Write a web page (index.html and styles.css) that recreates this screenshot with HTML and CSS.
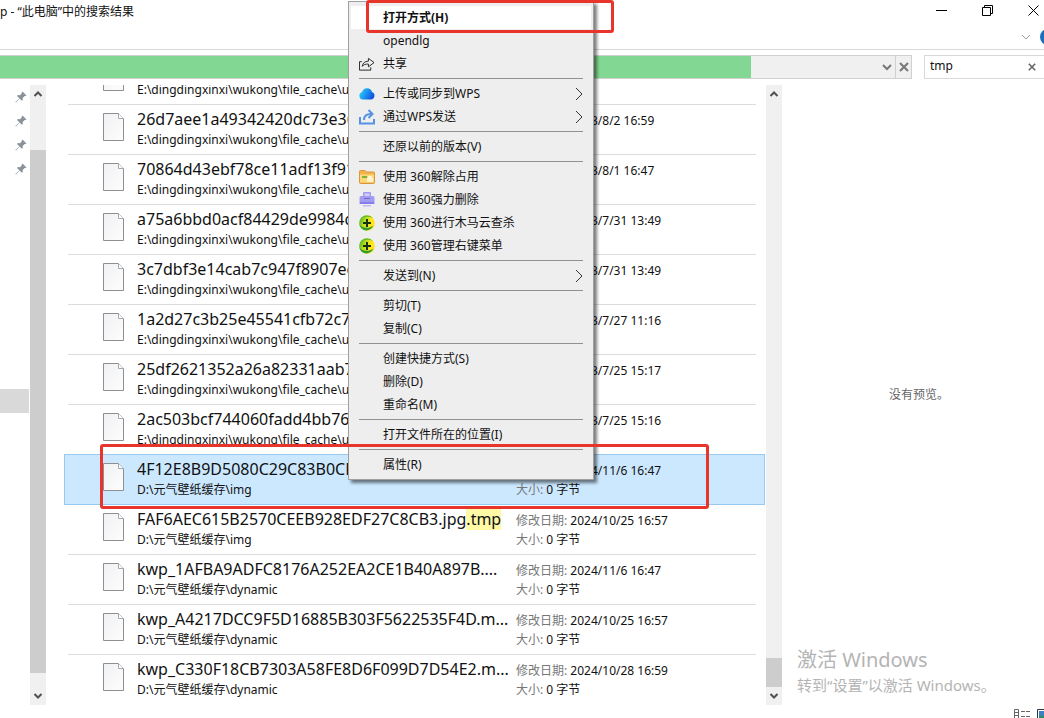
FILE: index.html
```html
<!DOCTYPE html>
<html lang="zh-CN">
<head>
<meta charset="utf-8">
<title>tmp - “此电脑”中的搜索结果</title>
<link rel="stylesheet" href="styles.css">
</head>
<body>
<svg class="defs" aria-hidden="true">
  <defs>
    <linearGradient id="paper" x1="0" y1="0" x2="1" y2="1"><stop offset="0" stop-color="#f0f1f3"/><stop offset="1" stop-color="#fdfdfd"/></linearGradient>
    <linearGradient id="cloud" x1="0" y1="0" x2="1" y2=".4"><stop offset="0" stop-color="#3bdcf0"/><stop offset=".5" stop-color="#1a9cf2"/><stop offset="1" stop-color="#1557e0"/></linearGradient>
    <linearGradient id="ball" x1="0" y1=".2" x2="1" y2=".6"><stop offset="0" stop-color="#3fae2a"/><stop offset=".35" stop-color="#b4dc20"/><stop offset=".7" stop-color="#ffe51f"/></linearGradient>
    <symbol id="file" viewBox="0 0 22 29"><path d="M.5.5h15l5 5v22H.5z" fill="url(#paper)" stroke="#8d8f92"/><path d="M15.500.5v5h5" fill="#fff" stroke="#a5a7aa"/></symbol>
    <symbol id="pin" viewBox="0 0 12 12"><path d="M7.500.5l4 4-1 .6-.8-.1-2 2 .1 1.900-.9.9L4.600 7.500.8 11.400l-.4-.4 4-3.800L2 5l1-.9 1.900.1 2-2-.1-.9z" fill="#8b929a"/></symbol>
    <symbol id="up" viewBox="0 0 10 10"><path d="M1.500 7L5 3.500 8.500 7" fill="none" stroke="#505050" stroke-width="2"/></symbol>
    <symbol id="down" viewBox="0 0 10 10"><path d="M1.500 3L5 6.500 8.500 3" fill="none" stroke="#505050" stroke-width="2"/></symbol>
    <symbol id="cross" viewBox="0 0 10 10"><path d="M1 1l8 8M9 1L1 9" fill="none" stroke="currentColor" stroke-width="2"/></symbol>
    <symbol id="next" viewBox="0 0 8 14"><path d="M1 1l6 6-6 6" fill="none" stroke="#333"/></symbol>
    <symbol id="safe" viewBox="0 0 16 16"><circle cx="8" cy="8" r="7.800" fill="url(#ball)"/><path d="M.3 9C2 13 9 14.500 14.500 10.500 12 17 2 17.500.3 9z" fill="#2f9e2c"/><path d="M1 5C3 0 10-1 14 3 9 1 4 1.500 1 5z" fill="#5dbb2a"/><path d="M8 4v8M4 8h8" stroke="#16330c" stroke-width="2"/></symbol>
  </defs>
</svg>

<div class="window">
  <header class="titlebar">
    <h1 class="title">p - “此电脑”中的搜索结果</h1>
    <div class="controls">
      <button type="button" aria-label="最小化"><svg width="11" height="11"><path d="M0 5.500h11" stroke="#000"/></svg></button>
      <button type="button" aria-label="还原"><svg width="11" height="11" fill="none" stroke="#000"><path d="M.5 2.500h8v8h-8zM2.500 2.500v-2h8v8h-2"/></svg></button>
      <button type="button" aria-label="关闭"><svg width="11" height="11"><path d="M.5.5l10 10M10.500.5l-10 10" stroke="#000"/></svg></button>
    </div>
  </header>
  <div class="ribbon">
    <button type="button" aria-label="展开功能区"><svg width="10" height="6"><path d="M1 1l4 4 4-4" fill="none" stroke="#a0a0a0"/></svg></button>
    <button type="button" class="help" aria-label="帮助"></button>
  </div>
  <div class="toolbar">
    <div class="address">
      <div class="progress"></div>
      <button type="button" aria-label="以前的位置"><svg width="10" height="10"><path d="M1 3l4 4 4-4" fill="none" stroke="#777" stroke-width="2"/></svg></button>
      <button type="button" class="stop" aria-label="停止"><svg width="10" height="10"><use href="#cross"/></svg></button>
    </div>
    <form class="search">
      <input type="text" value="tmp" aria-label="搜索">
      <button type="button" aria-label="清除"><svg width="8" height="8"><use href="#cross"/></svg></button>
    </form>
  </div>

  <main class="content">
    <nav class="nav" aria-label="快速访问">
      <ul>
        <li><svg><use href="#pin"/></svg></li>
        <li><svg><use href="#pin"/></svg></li>
        <li><svg><use href="#pin"/></svg></li>
        <li><svg><use href="#pin"/></svg></li>
      </ul>
      <div class="current"></div>
    </nav>
    <div class="scroll nav-scroll"><svg><use href="#up"/></svg><span class="before"></span><span class="thumb"></span><span class="after"></span><svg><use href="#down"/></svg></div>

    <ul class="files">
      <li><svg><use href="#file"/></svg><div class="name"><b>1f9c7b3a4e2d6058c1ab92e4</b><span>E:\dingdingxinxi\wukong\file_cache\u</span></div><div class="meta"><p>修改日期: <b>2023/8/2 17:02</b></p><p>大小: <b>217 字节</b></p></div></li>
      <li><svg><use href="#file"/></svg><div class="name"><b>26d7aee1a49342420dc73e36</b><span>E:\dingdingxinxi\wukong\file_cache\u</span></div><div class="meta"><p>修改日期: <b>2023/8/2 16:59</b></p><p>大小: <b>217 字节</b></p></div></li>
      <li><svg><use href="#file"/></svg><div class="name"><b>70864d43ebf78ce11adf13f91</b><span>E:\dingdingxinxi\wukong\file_cache\u</span></div><div class="meta"><p>修改日期: <b>2023/8/1 16:47</b></p><p>大小: <b>217 字节</b></p></div></li>
      <li><svg><use href="#file"/></svg><div class="name"><b>a75a6bbd0acf84429de9984d</b><span>E:\dingdingxinxi\wukong\file_cache\u</span></div><div class="meta"><p>修改日期: <b>2023/7/31 13:49</b></p><p>大小: <b>217 字节</b></p></div></li>
      <li><svg><use href="#file"/></svg><div class="name"><b>3c7dbf3e14cab7c947f8907ec</b><span>E:\dingdingxinxi\wukong\file_cache\u</span></div><div class="meta"><p>修改日期: <b>2023/7/31 13:49</b></p><p>大小: <b>217 字节</b></p></div></li>
      <li><svg><use href="#file"/></svg><div class="name"><b>1a2d27c3b25e45541cfb72c7</b><span>E:\dingdingxinxi\wukong\file_cache\u</span></div><div class="meta"><p>修改日期: <b>2023/7/27 11:16</b></p><p>大小: <b>217 字节</b></p></div></li>
      <li><svg><use href="#file"/></svg><div class="name"><b>25df2621352a26a82331aab7</b><span>E:\dingdingxinxi\wukong\file_cache\u</span></div><div class="meta"><p>修改日期: <b>2023/7/25 15:17</b></p><p>大小: <b>217 字节</b></p></div></li>
      <li><svg><use href="#file"/></svg><div class="name"><b>2ac503bcf744060fadd4bb769</b><span>E:\dingdingxinxi\wukong\file_cache\u</span></div><div class="meta"><p>修改日期: <b>2023/7/25 15:16</b></p><p>大小: <b>217 字节</b></p></div></li>
      <li class="selected"><svg><use href="#file"/></svg><div class="name"><b>4F12E8B9D5080C29C83B0CE9</b><span>D:\元气壁纸缓存\img</span></div><div class="meta"><p>修改日期: <b>2024/11/6 16:47</b></p><p>大小: <b>0 字节</b></p></div></li>
      <li><svg><use href="#file"/></svg><div class="name"><b>FAF6AEC615B2570CEEB928EDF27C8CB3.jpg<mark>.tmp</mark></b><span>D:\元气壁纸缓存\img</span></div><div class="meta"><p>修改日期: <b>2024/10/25 16:57</b></p><p>大小: <b>0 字节</b></p></div></li>
      <li><svg><use href="#file"/></svg><div class="name"><b>kwp_1AFBA9ADFC8176A252EA2CE1B40A897B....</b><span>D:\元气壁纸缓存\dynamic</span></div><div class="meta"><p>修改日期: <b>2024/11/6 16:47</b></p><p>大小: <b>0 字节</b></p></div></li>
      <li><svg><use href="#file"/></svg><div class="name"><b>kwp_A4217DCC9F5D16885B303F5622535F4D.m...</b><span>D:\元气壁纸缓存\dynamic</span></div><div class="meta"><p>修改日期: <b>2024/10/25 16:57</b></p><p>大小: <b>0 字节</b></p></div></li>
      <li><svg><use href="#file"/></svg><div class="name"><b>kwp_C330F18CB7303A58FE8D6F099D7D54E2.m...</b><span>D:\元气壁纸缓存\dynamic</span></div><div class="meta"><p>修改日期: <b>2024/10/28 16:59</b></p><p>大小: <b>0 字节</b></p></div></li>
    </ul>
    <div class="scroll list-scroll"><svg><use href="#up"/></svg><span class="before"></span><span class="thumb"></span><svg><use href="#down"/></svg></div>

    <aside class="preview">
      <p>没有预览。</p>
      <div class="watermark"><strong>激活 Windows</strong><span>转到“设置”以激活 Windows。</span></div>
    </aside>
  </main>

  <footer class="status">
    <button type="button" aria-label="详细信息"><svg width="16" height="10" fill="none" stroke="#666"><path d="M.5.5h4v9h-4zM.5 3.500h4M.5 6.500h4M7 2.500h4M12 2.500h4M7 7.500h4M12 7.500h4"/></svg></button>
    <button type="button" aria-label="大缩略图"><svg width="16" height="10"><path d="M.5.5h15v12H.5z" fill="#fff" stroke="#333"/><path d="M2 2h12v8H2z" fill="#3f7fc4"/><path d="M2 10V8l3-2 5 4z" fill="#2d8c65"/></svg></button>
  </footer>
</div>

<div class="menu" role="menu">
  <button type="button" role="menuitem" class="default"><i></i>打开方式(H)</button>
  <button type="button" role="menuitem"><i></i>opendlg</button>
  <button type="button" role="menuitem"><i><svg width="17" height="16" viewBox="0 0 17 16" fill="none" stroke="#222"><path d="M3 5.500H.5v9h12v-3M3.500 10.500c.5-3.500 2.500-5.500 6.500-5.500V2l6 4.500-6 4.500V8c-3 0-5 .5-6.500 2.500z"/></svg></i>共享</button>
  <hr>
  <button type="button" role="menuitem"><i><svg width="16" height="13" viewBox="0 0 16 13"><path d="M4 12.500a3.800 3.800 0 0 1-1-7.400A5.200 5.200 0 0 1 13 5a3.900 3.900 0 0 1-1 7.500z" fill="url(#cloud)"/></svg></i>上传或同步到WPS<svg class="more"><use href="#next"/></svg></button>
  <button type="button" role="menuitem"><i><svg width="16" height="16" viewBox="0 0 16 16" fill="none" stroke="#5591e5" stroke-width="2"><path d="M1 8v6.500h14V10"/><path d="M5 11c0-4 2-6 7-6"/><path d="M9.500 1l4 4-4 4"/></svg></i>通过WPS发送<svg class="more"><use href="#next"/></svg></button>
  <hr>
  <button type="button" role="menuitem"><i></i>还原以前的版本(V)</button>
  <hr>
  <button type="button" role="menuitem"><i><svg width="16" height="14" viewBox="0 0 16 14"><path d="M.5 1.500Q.5.5 1.500.5H6l1.500 1.500h7q1 0 1 1v9.500q0 1-1 1h-13q-1 0-1-1z" fill="#f3b24b" stroke="#d9963a"/><path d="M1 4.500h14v8H1z" fill="#fbd978"/><path d="M3 7h5" stroke="#7fae41" stroke-width="2"/><path d="M9.500 8.500V6.500h3v2M8.500 8.500h5v3h-5z" fill="#fff3be" stroke="#fff6d8"/></svg></i>使用 360解除占用</button>
  <button type="button" role="menuitem"><i><svg width="16" height="15" viewBox="0 0 16 15"><path d="M4 1q0-1 1-1h6q1 0 1 1v3h2q1.500 0 1.500 1.500V12H.5V5.500Q.5 4 2 4h2z" fill="#a29bf0"/><path d="M5.500 1.500h5V4h-5z" fill="#d3cff9"/><path d="M5 6.500h6" stroke="#6f69d4"/><path d="M1 10h14v2H1z" fill="#857df0"/><path d="M4 13h8v1.500H4z" fill="#c2bdf6"/></svg></i>使用 360强力删除</button>
  <button type="button" role="menuitem"><i><svg width="16" height="16"><use href="#safe"/></svg></i>使用 360进行木马云查杀</button>
  <button type="button" role="menuitem"><i><svg width="16" height="16"><use href="#safe"/></svg></i>使用 360管理右键菜单</button>
  <hr>
  <button type="button" role="menuitem"><i></i>发送到(N)<svg class="more"><use href="#next"/></svg></button>
  <hr>
  <button type="button" role="menuitem"><i></i>剪切(T)</button>
  <button type="button" role="menuitem"><i></i>复制(C)</button>
  <hr>
  <button type="button" role="menuitem"><i></i>创建快捷方式(S)</button>
  <button type="button" role="menuitem"><i></i>删除(D)</button>
  <button type="button" role="menuitem"><i></i>重命名(M)</button>
  <hr>
  <button type="button" role="menuitem"><i></i>打开文件所在的位置(I)</button>
  <hr>
  <button type="button" role="menuitem"><i></i>属性(R)</button>
</div>
<div class="frame frame-open"></div>
<div class="frame frame-file"></div>
</body>
</html>
```

FILE: styles.css
```css
* { box-sizing: border-box; }
body {
  margin: 0;
  font: 12px/18px "Noto Sans", "Noto Sans CJK SC", sans-serif;
  color: #111;
  background: #fff;
  overflow: hidden;
}
button {
  display: flex;
  align-items: center;
  justify-content: center;
  padding: 0;
  border: 0;
  background: none;
  font: inherit;
  color: inherit;
}
ul { list-style: none; margin: 0; padding: 0; }
p { margin: 0; }
.defs { position: absolute; width: 0; height: 0; }

.window { display: flex; flex-direction: column; height: 100vh; position: relative; overflow: hidden; }
.titlebar { display: flex; justify-content: space-between; height: 24px; }
.title { margin: 0; padding-top: 3px; font-size: 12px; font-weight: 400; line-height: 18px; }
.controls { display: flex; height: 21px; margin-right: -12px; }
.controls button { width: 46px; }

.ribbon { display: flex; justify-content: flex-end; align-items: center; gap: 9px; height: 26px; margin-right: -12px; border-bottom: 1px solid #d9d9d9; }
.help { width: 16px; height: 16px; border-radius: 50%; background: #1a6fc0; }

.toolbar { display: flex; gap: 12px; padding-top: 5px; height: 35px; }
.address { display: flex; flex: 1; height: 24px; border: 1px solid #d0d0d0; border-left: 0; background: #f0f0f0; }
.progress { width: 82.4%; margin-right: auto; background: #82d892; }
.address button { width: 16px; }
.address .stop { border-left: 1px solid #d0d0d0; color: #777; }
.search { display: flex; width: 120px; height: 24px; border: 1px solid #d9d9d9; border-right: 0; }
.search input { flex: 1; min-width: 0; padding: 0 5px 2px; border: 0; outline: 0; font: inherit; font-size: 12px; color: #111; }
.search button { width: 24px; color: #666; }

.content { display: flex; flex: 1; min-height: 0; }
.nav { width: 30px; }
.nav li { display: flex; align-items: center; height: 24px; padding-left: 15px; }
.nav li svg { width: 12px; height: 12px; }
.current { width: 29px; height: 24px; margin-top: 208px; background: #d9d9d9; }

.scroll { display: flex; flex-direction: column; align-items: center; width: 16px; background: #f0f0f0; }
.scroll svg { width: 10px; height: 10px; margin: 4px 0; flex: none; }
.thumb { width: 100%; background: #cdcdcd; }
.nav-scroll .before { flex: 47; }
.nav-scroll .thumb { flex: 523; }
.nav-scroll .after { flex: 14; }
.list-scroll .before { flex: 556; }
.list-scroll .thumb { flex: 29; }

.files { display: flex; flex-direction: column; justify-content: flex-end; flex: 1; margin-left: 18px; overflow: hidden; }
.files li {
  position: relative;
  display: flex;
  flex: none;
  height: 50px;
  margin: 0 10px 0 4px;
  padding-left: 35px;
  border-bottom: 1px solid #dcdcdc;
}
.files li:last-child { border-bottom-color: transparent; }
.files li svg { flex: none; width: 22px; height: 29px; margin: 8px 12px 0 0; }
.files li b { font-weight: 400; color: #111; }
.files .selected { margin: -1px 1px 0 0; height: 51px; padding: 0 8px 0 38px; border: 1px solid #99c9ee; background: #cce8ff; }
.name { flex: 1; min-width: 0; white-space: nowrap; }
.name b, .name span { display: block; }
.name b { font-size: 16px; line-height: 20px; padding-top: 4px; }
.name span { line-height: 18px; margin-top: 2px; }
.name mark { background: #fff9a6; color: inherit; }
.meta { width: 240px; padding-top: 6px; color: #777; white-space: nowrap; }
.meta p { line-height: 19px; }

.preview { position: relative; flex: none; width: 262px; display: flex; align-items: center; justify-content: center; color: #666; padding-left: 12px; }
.watermark { position: absolute; left: 15px; bottom: 8px; display: flex; flex-direction: column; color: #b4b4b4; white-space: nowrap; }
.watermark strong { font-size: 20px; line-height: 26px; font-weight: 400; }
.watermark span { font-size: 15px; line-height: 24px; }

.status { display: flex; justify-content: flex-end; gap: 7px; height: 13px; padding-top: 4px; margin-right: -9px; }

.menu {
  position: absolute;
  left: 348px;
  top: 1px;
  width: 246px;
  padding: 4px 2px 3px;
  border: 1px solid #a0a0a0;
  background: #eee;
  box-shadow: 3px 3px 3px rgba(0, 0, 0, .5);
}
.menu button { width: 100%; height: 23px; justify-content: flex-start; padding-right: 8px; text-align: left; }
.menu .default { font-weight: 700; background: #fff; }
.menu i { display: flex; align-items: center; justify-content: center; width: 16px; margin: 0 8px; }
.menu hr { height: 1px; margin: 3px 8px; border: 0; background: #919191; }
.menu .more { width: 8px; height: 14px; margin-left: auto; }

.frame { position: absolute; border: 3px solid #e8352c; border-radius: 3px; }
.frame-open { left: 366px; top: 0; width: 248px; height: 33px; }
.frame-file { left: 100px; top: 444px; width: 609px; height: 65px; }
```
